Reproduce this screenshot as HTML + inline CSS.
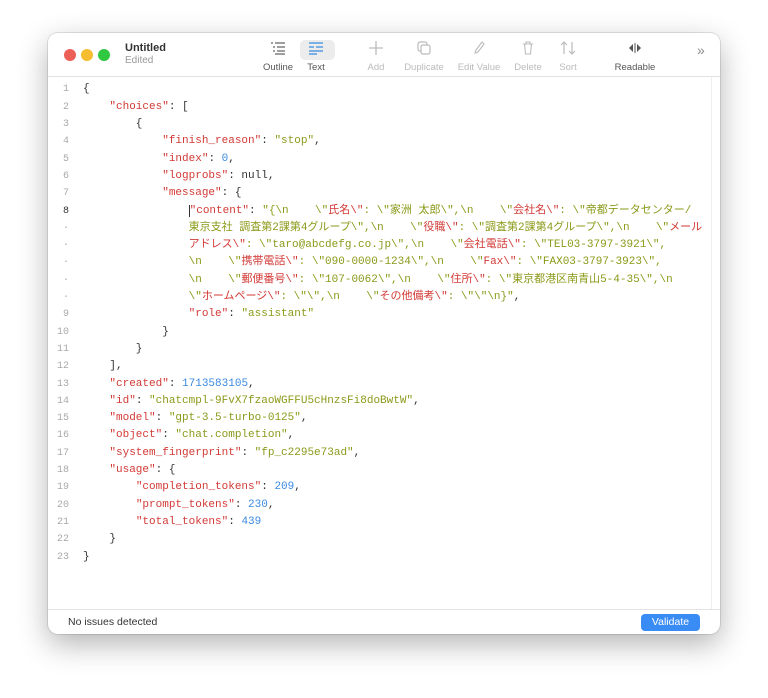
<!DOCTYPE html>
<html><head><meta charset="utf-8"><style>
*{margin:0;padding:0;box-sizing:border-box}
body{width:768px;height:698px;background:#fff;position:relative;overflow:hidden;font-family:"Liberation Sans","Noto Sans CJK JP",sans-serif}
.win{position:absolute;left:48px;top:33px;width:672px;height:601px;background:#fff;border-radius:10px;box-shadow:0 10px 30px rgba(0,0,0,.3),0 0 0 1px rgba(0,0,0,.1);overflow:hidden}
.tb{position:absolute;left:0;top:0;width:672px;height:44px;border-bottom:1px solid #e2e2e2;background:#fff}
.dot{position:absolute;top:16px;width:12px;height:12px;border-radius:50%}
.title{position:absolute;left:77px;top:9px;font-size:11px;font-weight:bold;color:#333}
.sub{position:absolute;left:77px;top:22px;font-size:10px;color:#999}
.tl{position:absolute;top:29px;font-size:9.5px;color:#555;transform:translateX(-50%);white-space:nowrap}
.dim{color:#bbb}
.ic{position:absolute;top:8px;transform:translateX(-50%)}
.code{position:absolute;left:0;top:44px;width:664px;height:532px;border-right:1px solid #eee}
.r{position:absolute;left:0;height:17px;line-height:17px;font-family:"Liberation Mono","Noto Sans CJK JP",monospace;font-size:11px;white-space:pre;color:#333}
.n{position:absolute;left:0;width:21px;text-align:right;color:#aaa;font-size:10px}
.t{position:absolute;left:35px}
.k{color:#d23a36}.s{color:#8b9a19}.b{color:#3a8ae0}
.ft{position:absolute;left:0;top:576px;width:672px;height:25px;border-top:1px solid #e2e2e2}
.btn{position:absolute;right:20px;top:4px;width:59px;height:17px;background:#3a8cf5;border-radius:4px;color:#fff;font-size:10.5px;text-align:center;line-height:17px}
</style></head><body>
<div class="win">
 <div class="tb">
  <div class="dot" style="left:16px;background:#ec5f57"></div>
  <div class="dot" style="left:33px;background:#f5bd2f"></div>
  <div class="dot" style="left:50px;background:#2fc840"></div>
  <div class="title">Untitled</div><div class="sub">Edited</div>
  <div style="position:absolute;left:252px;top:7px;width:35px;height:20px;background:#ececec;border-radius:5px"></div>
  <svg class="ic" style="left:230px" width="16" height="14"><g stroke="#666" stroke-width="1.3"><line x1="1" y1="2" x2="3" y2="2"/><line x1="5" y1="2" x2="15" y2="2"/><line x1="3" y1="6" x2="5" y2="6"/><line x1="7" y1="6" x2="15" y2="6"/><line x1="3" y1="10" x2="5" y2="10"/><line x1="7" y1="10" x2="15" y2="10"/><line x1="5" y1="13" x2="15" y2="13"/></g></svg>
  <svg class="ic" style="left:268px" width="16" height="14"><g stroke="#3a8ae0" stroke-width="1.3"><line x1="1" y1="2" x2="15" y2="2"/><line x1="1" y1="6" x2="6" y2="6"/><line x1="8" y1="6" x2="15" y2="6"/><line x1="1" y1="10" x2="15" y2="10"/><line x1="1" y1="13" x2="9" y2="13"/></g></svg>
  <svg class="ic" style="left:328px" width="14" height="14"><g stroke="#bbb" stroke-width="1.3"><line x1="7" y1="0" x2="7" y2="14"/><line x1="0" y1="7" x2="14" y2="7"/></g></svg>
  <svg class="ic" style="left:376px" width="14" height="14"><g stroke="#bbb" stroke-width="1.2" fill="none"><rect x="1" y="1" width="9" height="9" rx="2"/><rect x="4" y="4" width="9" height="9" rx="2" fill="#fff"/></g></svg>
  <svg class="ic" style="left:431px" width="12" height="14"><path d="M2 12 L3 9 L9 1 L11 3 L5 11 Z" stroke="#bbb" stroke-width="1.1" fill="none"/></svg>
  <svg class="ic" style="left:480px" width="12" height="14"><g stroke="#bbb" stroke-width="1.1" fill="none"><line x1="1" y1="3" x2="11" y2="3"/><path d="M4 3V1h4v2M2.5 3l1 10h5l1-10"/></g></svg>
  <svg class="ic" style="left:520px" width="16" height="14"><g stroke="#bbb" stroke-width="1.2" fill="none"><path d="M4 13V1M1 4l3-3 3 3M12 1v12M9 10l3 3 3-3"/></g></svg>
  <svg class="ic" style="left:587px;top:10px" width="14" height="10"><path d="M5 1L1 5l4 4zM9 1l4 4-4 4z" fill="#555"/><line x1="7" y1="0" x2="7" y2="10" stroke="#555"/></svg>
  <div style="position:absolute;left:649px;top:9px;font-size:14px;color:#888">»</div>
  <div class="tl" style="left:230px">Outline</div><div class="tl" style="left:268px">Text</div>
  <div class="tl dim" style="left:328px">Add</div><div class="tl dim" style="left:376px">Duplicate</div>
  <div class="tl dim" style="left:431px">Edit Value</div><div class="tl dim" style="left:480px">Delete</div>
  <div class="tl dim" style="left:520px">Sort</div><div class="tl" style="left:587px">Readable</div>
 </div>
 <div class="code">
<div class="r" style="top:4.4px"><span class="n">1</span><span class="t">{</span></div>
<div class="r" style="top:21.7px"><span class="n">2</span><span class="t">    <span class="k">"choices"</span>: [</span></div>
<div class="r" style="top:39px"><span class="n">3</span><span class="t">        {</span></div>
<div class="r" style="top:56.3px"><span class="n">4</span><span class="t">            <span class="k">"finish_reason"</span>: <span class="s">"stop"</span>,</span></div>
<div class="r" style="top:73.6px"><span class="n">5</span><span class="t">            <span class="k">"index"</span>: <span class="b">0</span>,</span></div>
<div class="r" style="top:90.9px"><span class="n">6</span><span class="t">            <span class="k">"logprobs"</span>: null,</span></div>
<div class="r" style="top:108.2px"><span class="n">7</span><span class="t">            <span class="k">"message"</span>: {</span></div>
<div class="r" style="top:125.5px"><span class="n" style="color:#333">8</span><span class="t">                <span style="border-left:1px solid #333"></span><span class="k">"content"</span>: <span class="s">"{\n    \"</span><span class="k">氏名\"</span><span class="s">: \"家洲 太郎\",\n    \"</span><span class="k">会社名\"</span><span class="s">: \"帝都データセンター/</span></span></div>
<div class="r" style="top:142.8px"><span class="n">·</span><span class="t">                <span class="s">東京支社 調査第2課第4グループ\",\n    \"</span><span class="k">役職\"</span><span class="s">: \"調査第2課第4グループ\",\n    \"</span><span class="k">メール</span></span></div>
<div class="r" style="top:160.1px"><span class="n">·</span><span class="t">                <span class="k">アドレス\"</span><span class="s">: \"taro@abcdefg.co.jp\",\n    \"</span><span class="k">会社電話\"</span><span class="s">: \"TEL03-3797-3921\",</span></span></div>
<div class="r" style="top:177.4px"><span class="n">·</span><span class="t">                <span class="s">\n    \"</span><span class="k">携帯電話\"</span><span class="s">: \"090-0000-1234\",\n    \"</span><span class="k">Fax\"</span><span class="s">: \"FAX03-3797-3923\",</span></span></div>
<div class="r" style="top:194.7px"><span class="n">·</span><span class="t">                <span class="s">\n    \"</span><span class="k">郵便番号\"</span><span class="s">: \"107-0062\",\n    \"</span><span class="k">住所\"</span><span class="s">: \"東京都港区南青山5-4-35\",\n</span></span></div>
<div class="r" style="top:212px"><span class="n">·</span><span class="t">                <span class="s">\"</span><span class="k">ホームページ\"</span><span class="s">: \"\",\n    \"</span><span class="k">その他備考\"</span><span class="s">: \"\"\n}"</span>,</span></div>
<div class="r" style="top:229.3px"><span class="n">9</span><span class="t">                <span class="k">"role"</span>: <span class="s">"assistant"</span></span></div>
<div class="r" style="top:246.6px"><span class="n">10</span><span class="t">            }</span></div>
<div class="r" style="top:263.9px"><span class="n">11</span><span class="t">        }</span></div>
<div class="r" style="top:281.2px"><span class="n">12</span><span class="t">    ],</span></div>
<div class="r" style="top:298.5px"><span class="n">13</span><span class="t">    <span class="k">"created"</span>: <span class="b">1713583105</span>,</span></div>
<div class="r" style="top:315.8px"><span class="n">14</span><span class="t">    <span class="k">"id"</span>: <span class="s">"chatcmpl-9FvX7fzaoWGFFU5cHnzsFi8doBwtW"</span>,</span></div>
<div class="r" style="top:333.1px"><span class="n">15</span><span class="t">    <span class="k">"model"</span>: <span class="s">"gpt-3.5-turbo-0125"</span>,</span></div>
<div class="r" style="top:350.4px"><span class="n">16</span><span class="t">    <span class="k">"object"</span>: <span class="s">"chat.completion"</span>,</span></div>
<div class="r" style="top:367.7px"><span class="n">17</span><span class="t">    <span class="k">"system_fingerprint"</span>: <span class="s">"fp_c2295e73ad"</span>,</span></div>
<div class="r" style="top:385px"><span class="n">18</span><span class="t">    <span class="k">"usage"</span>: {</span></div>
<div class="r" style="top:402.3px"><span class="n">19</span><span class="t">        <span class="k">"completion_tokens"</span>: <span class="b">209</span>,</span></div>
<div class="r" style="top:419.6px"><span class="n">20</span><span class="t">        <span class="k">"prompt_tokens"</span>: <span class="b">230</span>,</span></div>
<div class="r" style="top:436.9px"><span class="n">21</span><span class="t">        <span class="k">"total_tokens"</span>: <span class="b">439</span></span></div>
<div class="r" style="top:454.2px"><span class="n">22</span><span class="t">    }</span></div>
<div class="r" style="top:471.5px"><span class="n">23</span><span class="t">}</span></div>
 </div>
 <div class="ft">
  <div style="position:absolute;left:20px;top:6px;font-size:10.5px;color:#333">No issues detected</div>
  <div class="btn">Validate</div>
 </div>
</div>
</body></html>
